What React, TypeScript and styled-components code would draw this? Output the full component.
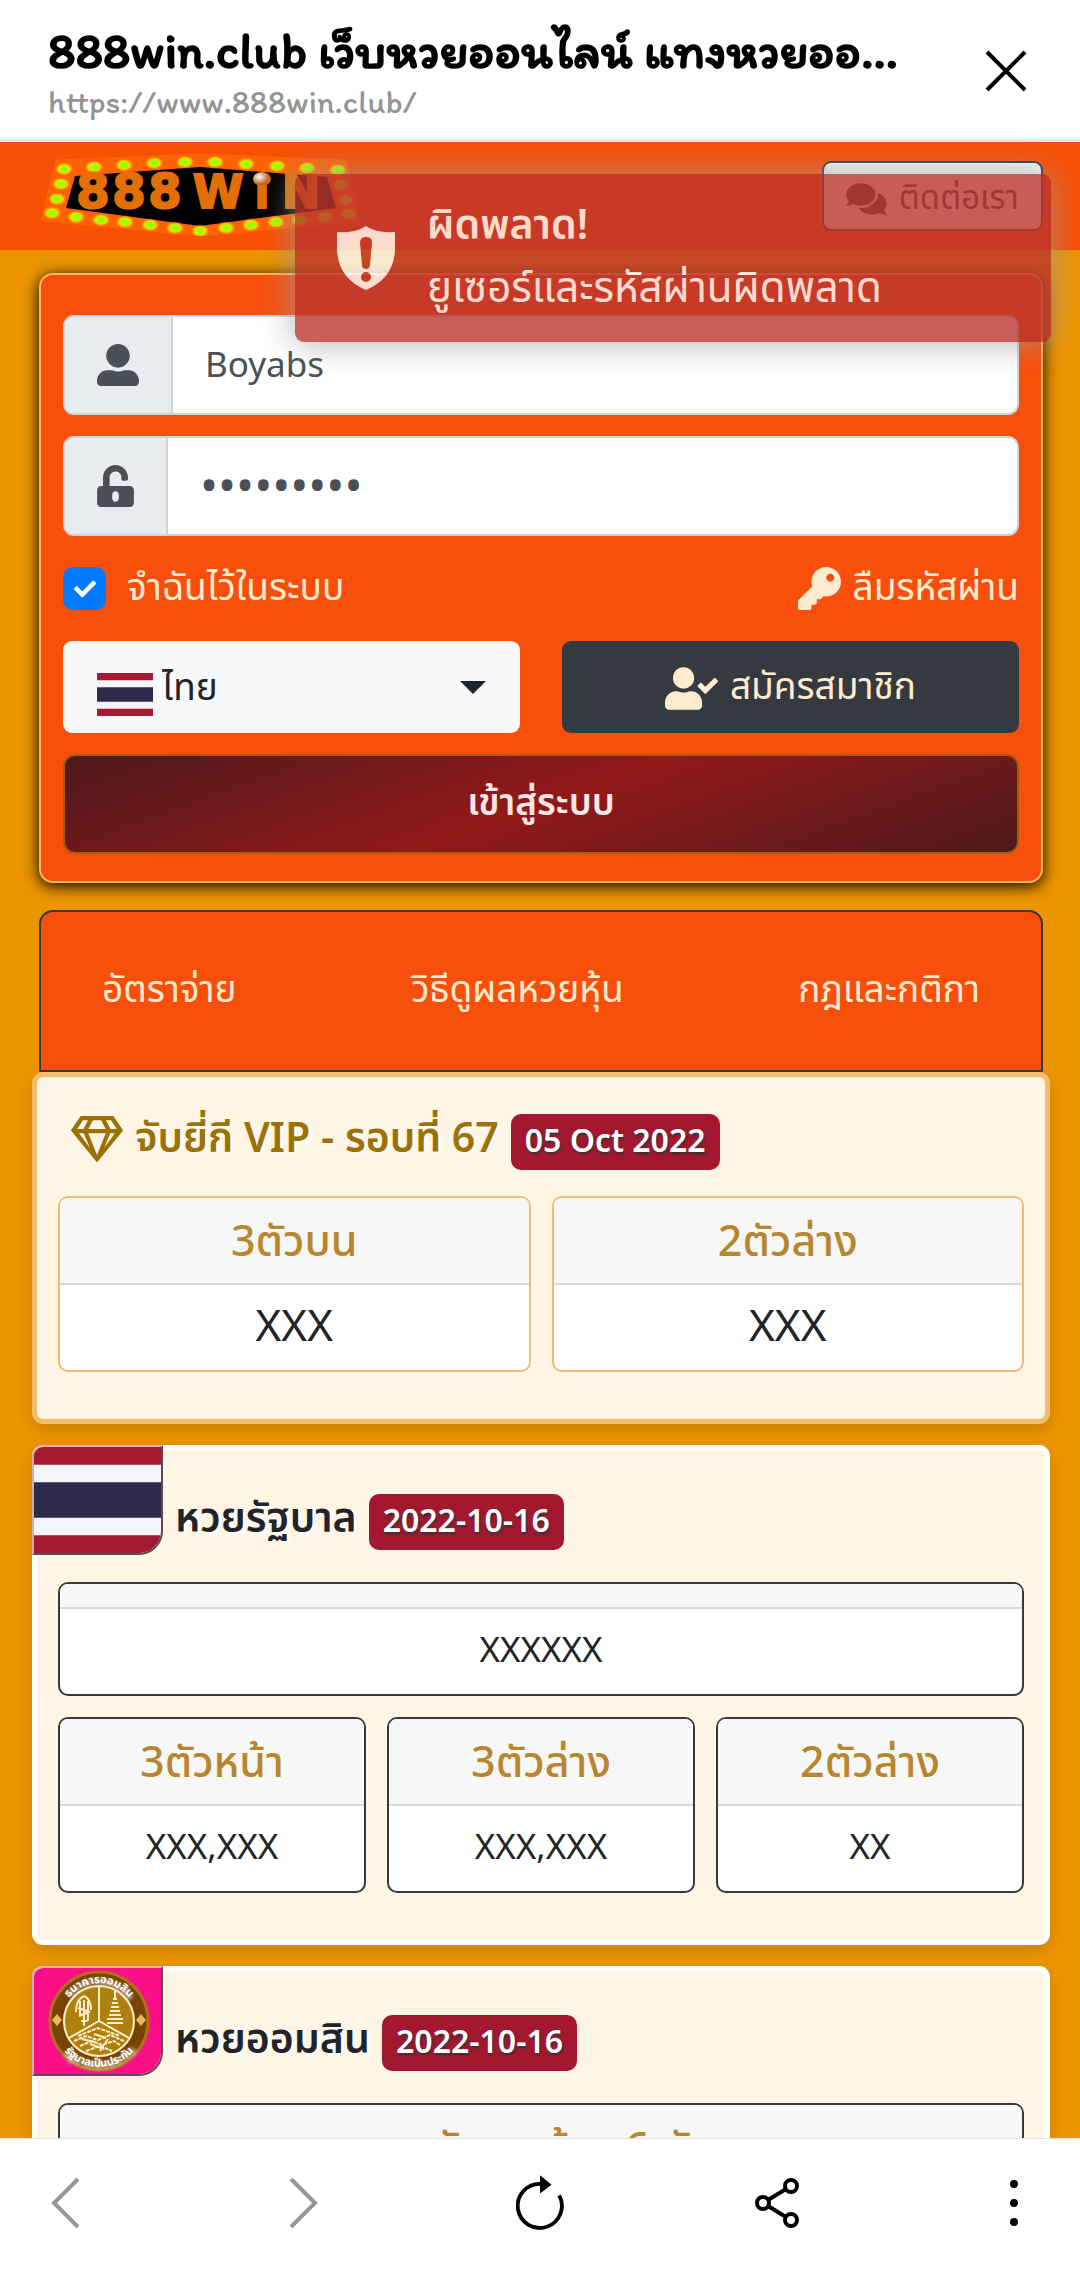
import React from 'react';
import styled, { createGlobalStyle } from 'styled-components';
import { FaUserAlt, FaUnlockAlt, FaComments, FaKey, FaUserCheck, FaRegGem, FaCheck } from 'react-icons/fa';

const thai = '"Noto Sans Thai", "Noto Sans", "Open Sans", sans-serif';
const hand = 'Itim, Mali, Sriracha, "Noto Sans Thai", "Noto Sans", sans-serif';

const GlobalStyle = createGlobalStyle`
  *, *::before, *::after { box-sizing: border-box; }
  body { margin: 0; font-family: ${thai}; font-size: 37px; color: #212529; background: #ec9500; }
  button, input, select { font: inherit; color: inherit; }
  h1, h2, h3, p { margin: 0; }
`;

const Screen = styled.div`
  display: flex;
  flex-direction: column;
  height: 100vh;
`;

/* Browser chrome */
const AddressBar = styled.header`
  display: flex;
  align-items: center;
  justify-content: space-between;
  flex: none;
  height: 142px;
  padding: 2px 50px 0 48px;
  background: #fff;
  border-bottom: 3px solid #ebebeb;
  font-family: ${hand};
`;

const PageTitle = styled.h1`
  font-size: 50px;
  font-weight: 700;
  line-height: 62px;
  color: #000;
  white-space: nowrap;
`;

const PageUrl = styled.p`
  font-size: 33px;
  line-height: 40px;
  color: #949494;
`;

const IconButton = styled.button`
  display: flex;
  align-items: center;
  justify-content: center;
  width: 48px;
  height: 64px;
  padding: 0;
  border: 0;
  background: none;
`;

const BrowserNav = styled.nav`
  display: flex;
  align-items: center;
  justify-content: space-between;
  flex: none;
  height: 132px;
  padding: 0 42px 4px;
  background: #fff;
  border-top: 1px solid #e4e4e4;
`;

/* Site */
const Viewport = styled.div`
  position: relative;
  flex: 1;
  min-height: 0;
  overflow: hidden auto;
  scrollbar-width: none;
`;

const SiteHeader = styled.header`
  display: flex;
  justify-content: space-between;
  align-items: flex-start;
  height: 108px;
  padding: 12px 37px 0 40px;
  background: #f74f04;
`;

const ContactButton = styled.button`
  display: flex;
  align-items: center;
  gap: 12px;
  height: 70px;
  margin-top: 7px;
  padding: 6px 22px 0;
  border: 2px solid #343a40;
  border-radius: 9px;
  background: #f8f9fa;
  color: #343a40;
  font-size: 33px;
  white-space: nowrap;
`;

const Glyph = styled.span<{ $w: number; $h: number }>`
  display: inline-flex;
  flex: none;
  svg { width: ${p => p.$w}px; height: ${p => p.$h}px; }
`;

const Content = styled.main`
  display: flex;
  flex-direction: column;
  padding: 23px 30px 40px 32px;
`;

const LoginPanel = styled.form`
  display: flex;
  flex-direction: column;
  gap: 21px;
  margin: 0 7px;
  padding: 40px 22px 27px;
  border: 2px solid #fcb65c;
  border-radius: 14px;
  background: #f84f0c;
  box-shadow: 0 3px 16px #000;
`;

const InputGroup = styled.div`
  display: flex;
  height: 100px;
  overflow: hidden;
  border: 2px solid #ced4da;
  border-radius: 11px;
  background: #fff;
`;

const Addon = styled.label`
  display: flex;
  align-items: center;
  padding: 0 32px;
  border-right: 2px solid #ced4da;
  background: #e9ecef;
  color: #495057;
`;

const TextInput = styled.input`
  flex: 1;
  min-width: 0;
  padding: 2px 32px 0;
  border: 0;
  outline: 0;
  background: none;
  color: #495057;
  font-size: 35px;
  &[type='password'] { font-size: 48px; }
`;

const OptionsRow = styled.div`
  display: flex;
  align-items: center;
  justify-content: space-between;
  height: 63px;
  color: #ffebcd;
`;

const Remember = styled.label`
  display: flex;
  align-items: center;
  gap: 21px;
`;

const TickBox = styled.span`
  display: grid;
  place-items: center;
  width: 43px;
  height: 43px;
  border-radius: 10px;
  background: #007bff;
  color: #fff;
  > * { grid-area: 1 / 1; }
  input { appearance: none; width: 43px; height: 43px; margin: 0; }
  svg { width: 22px; height: 22px; }
`;

const PlainLink = styled.a`
  display: flex;
  align-items: center;
  gap: 12px;
  color: #ffebcd;
  text-decoration: none;
  white-space: nowrap;
`;

const PairRow = styled.div`
  display: grid;
  grid-template-columns: 1fr 1fr;
  gap: 42px;
`;

const LanguageField = styled.label`
  display: flex;
  align-items: center;
  gap: 9px;
  height: 92px;
  padding: 0 34px;
  border-radius: 9px;
  background: #f8f9fa;
  select {
    flex: 1;
    min-width: 0;
    padding: 4px 0 0;
    border: 0;
    appearance: none;
    background: none;
    color: #212529;
  }
`;

const Caret = styled.span`
  border: 13px solid transparent;
  border-top-color: #212529;
  border-bottom: 0;
`;

const RegisterButton = styled.button`
  display: flex;
  align-items: center;
  justify-content: center;
  gap: 12px;
  padding: 2px 0 0;
  border: 0;
  border-radius: 9px;
  background: #343a40;
  color: #ffebcd;
`;

const LoginButton = styled.button`
  height: 100px;
  border: 2px solid #a85a0a;
  border-radius: 12px;
  background: linear-gradient(160deg, #4d191b 0%, #92191a 50%, #4d191b 100%);
  color: #f6e6e6;
  font-weight: 600;
`;

const InfoNav = styled.nav`
  display: flex;
  align-items: center;
  justify-content: space-between;
  height: 162px;
  margin: 27px 7px 0;
  padding: 0 61px;
  border: 2px solid #343a40;
  border-radius: 14px 14px 0 0;
  background: #f84f0c;
`;

const LotteryCard = styled.section<{ $edge: string }>`
  margin-bottom: 21px;
  padding: 0 21px 47px;
  border: 5px solid ${p => p.$edge};
  border-radius: 11px;
  background: #fef5e5;
  box-shadow: 0 6px 16px rgba(0, 0, 0, 0.15);
`;

const CardHead = styled.div<{ $color: string; $tall?: boolean }>`
  display: flex;
  align-items: center;
  gap: 12px;
  height: ${p => (p.$tall ? 132 : 119)}px;
  padding: ${p => (p.$tall ? '6px 0 0' : '4px 0 0 13px')};
  color: ${p => p.$color};
  text-shadow: 2px 2px 4px #fff;
`;

const CardTitle = styled.h2`
  font-size: 41px;
  font-weight: 600;
  line-height: 60px;
  white-space: nowrap;
`;

const Badge = styled.time`
  display: flex;
  align-items: center;
  height: 56px;
  margin-top: 6px;
  padding: 0 14px;
  border-radius: 10px;
  background: #a3182f;
  color: #fff;
  font-size: 32px;
  font-weight: 600;
  text-shadow: 1px 2px 3px #333;
  white-space: nowrap;
`;

const Corner = styled.span`
  align-self: flex-start;
  flex: none;
  width: 131px;
  height: 110px;
  margin: -11px 0 0 -26px;
  overflow: hidden;
  border: 2px solid;
  border-color: #e5b5ac #5c4a52 #5c4a52 #c9b0b4;
  border-radius: 11px 0 24px 0;
  svg { display: block; width: 100%; height: 100%; }
`;

const Results = styled.div<{ $cols: number }>`
  display: grid;
  grid-template-columns: repeat(${p => p.$cols}, 1fr);
  gap: 21px;
  & + & { margin-top: 21px; }
`;

const ResultBox = styled.article<{ $edge: string }>`
  overflow: hidden;
  border: 2px solid ${p => p.$edge};
  border-radius: 10px;
  background: #fff;
  text-align: center;
`;

const ResultName = styled.h3`
  min-height: 25px;
  padding: 4px 10px 0;
  border-bottom: 2px solid #d8d8d8;
  background: #f7f7f7;
  color: #b8862f;
  font-size: 43px;
  font-weight: 500;
  line-height: 81px;
  &:empty { line-height: 0; }
`;

const ResultValue = styled.p<{ $large?: boolean }>`
  font-size: ${p => (p.$large ? 44 : 35)}px;
  line-height: 85px;
`;

const Toast = styled.div`
  position: absolute;
  top: 32px;
  right: 29px;
  display: flex;
  align-items: center;
  gap: 32px;
  width: 70%;
  height: 168px;
  padding: 0 42px;
  border-radius: 9px;
  background: #bd362f;
  box-shadow: 0 0 34px #999;
  color: #fff;
  opacity: 0.8;
`;

const ToastTitle = styled.p`
  font-size: 41px;
  font-weight: 600;
  line-height: 63px;
`;

const ToastText = styled.p`
  font-size: 42px;
  line-height: 63px;
  white-space: nowrap;
`;

const bulbs = [
  [24, 15], [54, 13], [84, 11], [114, 9], [145, 8], [175, 8], [206, 10], [237, 12], [267, 14], [298, 16],
  [21, 30], [17, 45], [12, 59], [36, 63], [61, 66], [85, 68], [110, 71], [135, 74], [160, 77], [186, 74],
  [211, 71], [236, 68], [260, 66], [285, 63], [309, 60], [301, 31], [305, 46],
];

const Logo = () => (
  <svg width="322" height="82" viewBox="0 0 322 82" role="img" aria-label="888WiN">
    <defs>
      <radialGradient id="bulb">
        <stop offset="0.45" stopColor="#a4ff00" />
        <stop offset="0.6" stopColor="#ffd000" />
        <stop offset="1" stopColor="#ff6a00" stopOpacity="0" />
      </radialGradient>
      <radialGradient id="ball" cx="0.35" cy="0.35">
        <stop offset="0" stopColor="#fff" />
        <stop offset="1" stopColor="#c86a20" />
      </radialGradient>
    </defs>
    <path d="M18 9 160 3 304 9 317 65 160 79 5 64Z" fill="#ff6205" stroke="#ff6205" strokeWidth="7" strokeLinejoin="round" />
    <path d="M35 22 160 13 287 23 296 54 160 72 26 54Z" fill="#000" />
    {bulbs.map(([x, y]) => <ellipse key={`${x}-${y}`} cx={x} cy={y} rx="10" ry="7" fill="url(#bulb)" />)}
    <g fill="#e36f05" stroke="#e36f05" strokeWidth="2" fontFamily="DejaVu Sans" fontWeight="700" fontSize="42" textAnchor="middle">
      <text x="53" y="54" fontSize="48">8</text>
      <text x="89" y="54" fontSize="48">8</text>
      <text x="125" y="54" fontSize="48">8</text>
      <text x="178" y="54" fontSize="46">W</text>
      <text x="222" y="54">i</text>
      <text x="261" y="54" fontSize="46">N</text>
    </g>
    <ellipse cx="222" cy="25" rx="9" ry="7" fill="url(#ball)" />
  </svg>
);

const Flag = () => (
  <svg viewBox="0 0 60 48" preserveAspectRatio="none" aria-hidden="true">
    <path fill="#a51931" d="M0 0h60v48H0z" />
    <path fill="#f4f5f8" d="M0 8h60v32H0z" />
    <path fill="#2d2a4a" d="M0 16h60v16H0z" />
  </svg>
);

const MiniFlag = styled.span`
  display: flex;
  width: 56px;
  height: 43px;
  margin-top: 15px;
  svg { width: 100%; height: 100%; }
`;

const Emblem = () => (
  <svg viewBox="0 0 127 106" role="img" aria-label="ธนาคารออมสิน">
    <path fill="#fa0f89" d="M0 0h127v106H0z" />
    <circle cx="65" cy="53" r="49" fill="#764400" stroke="#b3701a" strokeWidth="3" />
    <circle cx="65" cy="53" r="35" fill="#b0800e" stroke="#fdeecb" strokeWidth="2" />
    <path d="M65 53V18M65 53 35 70M65 53 95 70" stroke="#fdeecb" strokeWidth="2" />
    <g stroke="#fdeecb" fill="none" strokeWidth="2">
      <path d="M50 58V32M50 28c-5 2-8 8-8 16M50 28c5 2 7 8 7 14M46 33v14M54 33v20M44 40l12 4M45 48l10-4M47 53h6" />
      <path d="M81 23v7M79 31h4M78 35h6M77 39h8M76 43h10M75 47h12M73 51h16M73 55h16" />
      <path d="M44 68l20-8 22 8M40 73l12-5 12 4 12-5 14 6M46 78l12-5 10 4 12-4 6 4M52 83l14-5 12 5" strokeDasharray="4 1" />
      <path d="M48 71l12 3M60 66l12 4M56 76l14 5M74 71l-8 12" />
    </g>
    <path fill="#e8b65c" d="m23 46 5 6-5 6-5-6zM107 46l5 6-5 6-5-6z" />
    <path id="ringTop" d="M27 53a38 38 0 0 1 76 0" fill="none" />
    <path id="ringBottom" d="M19 53a46 46 0 0 0 92 0" fill="none" />
    <g fill="#fff" fontFamily="Noto Sans Thai, Noto Sans, sans-serif" fontWeight="700" fontSize="11" textAnchor="middle">
      <text><textPath href="#ringTop" startOffset="50%">ธนาคารออมสิน</textPath></text>
      <text><textPath href="#ringBottom" startOffset="50%">รัฐบาลเป็นประกัน</textPath></text>
    </g>
  </svg>
);

const Shield = () => (
  <svg width="58" height="64" viewBox="0 0 58 64" aria-hidden="true">
    <path
      fill="#fff"
      fillRule="evenodd"
      d="M29 0C22 5 11 7 0 6v16c0 20 11 35 29 42 18-7 29-22 29-42V6C47 7 36 5 29 0Zm0 11c4 0 6 2 6 6l-2 22c0 3-2 4-4 4s-4-1-4-4l-2-22c0-4 2-6 6-6Zm0 35a5 5 0 1 1 0 10 5 5 0 0 1 0-10Z"
    />
  </svg>
);

type Result = { name: string; value: string };

const ResultCard = ({ name, value, edge, large }: Result & { edge: string; large?: boolean }) => (
  <ResultBox $edge={edge}>
    <ResultName>{name}</ResultName>
    <ResultValue $large={large}>{value}</ResultValue>
  </ResultBox>
);

const vip: Result[] = [
  { name: '3ตัวบน', value: 'XXX' },
  { name: '2ตัวล่าง', value: 'XXX' },
];

const government: Result[] = [
  { name: '3ตัวหน้า', value: 'XXX,XXX' },
  { name: '3ตัวล่าง', value: 'XXX,XXX' },
  { name: '2ตัวล่าง', value: 'XX' },
];

export default function App() {
  return (
    <Screen>
      <GlobalStyle />
      <AddressBar>
        <div>
          <PageTitle>888win.club เว็บหวยออนไลน์ แทงหวยออ...</PageTitle>
          <PageUrl>https://www.888win.club/</PageUrl>
        </div>
        <IconButton aria-label="Close">
          <svg width="42" height="42" viewBox="0 0 42 42" fill="none" stroke="#000" strokeWidth="4">
            <path d="M2 2 40 40M40 2 2 40" />
          </svg>
        </IconButton>
      </AddressBar>

      <Viewport>
        <SiteHeader>
          <Logo />
          <ContactButton>
            <Glyph $w={41} $h={36}><FaComments /></Glyph>
            ติดต่อเรา
          </ContactButton>
        </SiteHeader>

        <Content>
          <LoginPanel onSubmit={e => e.preventDefault()}>
            <InputGroup>
              <Addon htmlFor="user" aria-label="Username"><Glyph $w={42} $h={42}><FaUserAlt /></Glyph></Addon>
              <TextInput id="user" defaultValue="Boyabs" />
            </InputGroup>
            <InputGroup>
              <Addon htmlFor="pass" aria-label="Password"><Glyph $w={37} $h={42}><FaUnlockAlt /></Glyph></Addon>
              <TextInput id="pass" type="password" defaultValue="password1" />
            </InputGroup>
            <OptionsRow>
              <Remember>
                <TickBox><input type="checkbox" defaultChecked /><FaCheck /></TickBox>
                จำฉันไว้ในระบบ
              </Remember>
              <PlainLink href="#forgot">
                <Glyph $w={43} $h={43}><FaKey /></Glyph>
                ลืมรหัสผ่าน
              </PlainLink>
            </OptionsRow>
            <PairRow>
              <LanguageField>
                <MiniFlag><Flag /></MiniFlag>
                <select aria-label="Language"><option>ไทย</option></select>
                <Caret />
              </LanguageField>
              <RegisterButton type="button">
                <Glyph $w={53} $h={43}><FaUserCheck /></Glyph>
                สมัครสมาชิก
              </RegisterButton>
            </PairRow>
            <LoginButton type="submit">เข้าสู่ระบบ</LoginButton>
          </LoginPanel>

          <InfoNav>
            <PlainLink href="#rates">อัตราจ่าย</PlainLink>
            <PlainLink href="#stocks">วิธีดูผลหวยหุ้น</PlainLink>
            <PlainLink href="#rules">กฎและกติกา</PlainLink>
          </InfoNav>

          <LotteryCard $edge="#f3bd70">
            <CardHead $color="#9a7208">
              <Glyph $w={52} $h={46}><FaRegGem /></Glyph>
              <CardTitle>จับยี่กี VIP - รอบที่ 67</CardTitle>
              <Badge>05 Oct 2022</Badge>
            </CardHead>
            <Results $cols={2}>
              {vip.map(r => <ResultCard key={r.name} {...r} edge="#f0bc74" large />)}
            </Results>
          </LotteryCard>

          <LotteryCard $edge="#fff">
            <CardHead $color="#212529" $tall>
              <Corner><Flag /></Corner>
              <CardTitle>หวยรัฐบาล</CardTitle>
              <Badge>2022-10-16</Badge>
            </CardHead>
            <Results $cols={1}>
              <ResultCard name="" value="XXXXXX" edge="#343a40" />
            </Results>
            <Results $cols={3}>
              {government.map(r => <ResultCard key={r.name} {...r} edge="#343a40" />)}
            </Results>
          </LotteryCard>

          <LotteryCard $edge="#fff">
            <CardHead $color="#212529" $tall>
              <Corner><Emblem /></Corner>
              <CardTitle>หวยออมสิน</CardTitle>
              <Badge>2022-10-16</Badge>
            </CardHead>
            <Results $cols={1}>
              <ResultBox $edge="#343a40"><ResultName>รางวัลเลขท้าย 6 ตัว</ResultName></ResultBox>
            </Results>
          </LotteryCard>
        </Content>

        <Toast role="alert">
          <Shield />
          <div>
            <ToastTitle>ผิดพลาด!</ToastTitle>
            <ToastText>ยูเซอร์และรหัสผ่านผิดพลาด</ToastText>
          </div>
        </Toast>
      </Viewport>

      <BrowserNav>
        <IconButton aria-label="Back">
          <svg width="30" height="50" viewBox="0 0 30 50" fill="none" stroke="#969696" strokeWidth="4"><path d="M27 1 3 25l24 24" /></svg>
        </IconButton>
        <IconButton aria-label="Forward">
          <svg width="30" height="50" viewBox="0 0 30 50" fill="none" stroke="#969696" strokeWidth="4"><path d="m3 1 24 24L3 49" /></svg>
        </IconButton>
        <IconButton aria-label="Reload">
          <svg width="50" height="58" viewBox="0 0 50 58" fill="none" stroke="#000" strokeWidth="4">
            <path d="M45 21A23 23 0 1 1 25 9" />
            <path d="M25 0v19l12-9z" fill="#000" stroke="none" />
          </svg>
        </IconButton>
        <IconButton aria-label="Share">
          <svg width="46" height="52" viewBox="0 0 46 52" fill="none" stroke="#000" strokeWidth="4">
            <circle cx="9" cy="26" r="6" /><circle cx="37" cy="9" r="6" /><circle cx="37" cy="43" r="6" />
            <path d="m14 23 18-11M14 29l18 11" />
          </svg>
        </IconButton>
        <IconButton aria-label="Menu">
          <svg width="8" height="48" viewBox="0 0 8 48"><circle cx="4" cy="5" r="4" /><circle cx="4" cy="24" r="4" /><circle cx="4" cy="43" r="4" /></svg>
        </IconButton>
      </BrowserNav>
    </Screen>
  );
}
